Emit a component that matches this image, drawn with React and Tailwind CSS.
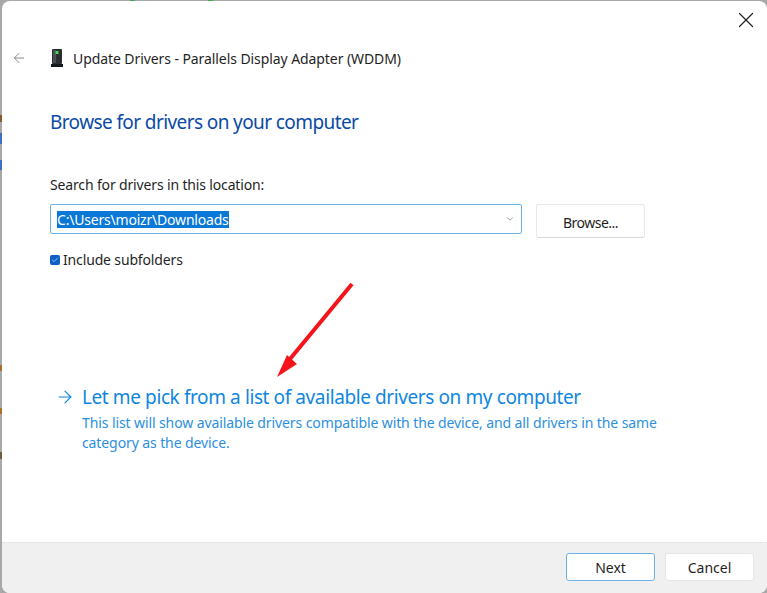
import React from 'react';
import { ChevronDown, ArrowLeft, ArrowRight, X, Check } from 'lucide-react';

function DeviceIcon() {
  return (
    <svg width="14" height="20" viewBox="0 0 14 20">
      <rect x="2" y="1" width="10" height="15" rx="1" fill="#2b2f33" />
      <rect x="3" y="2" width="3" height="13" fill="#4a5055" />
      <rect x="5.5" y="3" width="3" height="3" fill="#3ddc4a" />
      <rect x="1" y="16" width="12" height="3" fill="#15181a" />
    </svg>
  );
}

const marks = [
  'left-0 top-[115px] w-[2px] h-[7px] bg-[#8a5a2a]',
  'left-0 top-[133px] w-[2px] h-[11px] bg-[#3f6fc0]',
  'left-0 top-[160px] w-[2px] h-[10px] bg-[#3f6fc0]',
  'left-0 top-[365px] w-[2px] h-[6px] bg-[#a8722e]',
  'left-0 top-[408px] w-[2px] h-[6px] bg-[#a8722e]',
  'left-0 top-[452px] w-[2px] h-[7px] bg-[#7a5a3a]',
  'left-[130px] top-0 w-[5px] h-px bg-[#3fae4a]',
  'left-[208px] top-0 w-[5px] h-px bg-[#3fae4a]',
];

export default function App() {
  return (
    <div className="relative w-[767px] h-[593px] overflow-hidden bg-[#a8a8a8] font-['Noto_Sans',sans-serif] text-[#1f1f1f]">
      {marks.map((m) => <span key={m} className={'absolute ' + m} />)}

      <div className="relative h-[592px] ml-[2px] mt-px flex flex-col bg-white rounded-lg overflow-hidden">
        <div className="flex justify-end pt-[6px] pr-[8px] h-[42px]">
          <X size={26} strokeWidth={1.1} className="text-[#222]" />
        </div>

        <div className="flex-1 flex flex-col">
          <div className="flex items-center h-[30px] pl-[9px]">
            <ArrowLeft size={16} strokeWidth={1.5} className="text-[#8a8a8a]" />
            <div className="ml-[23px]"><DeviceIcon /></div>
            <span className="ml-[9px] text-[14px] tracking-[-0.08px]">Update Drivers - Parallels Display Adapter (WDDM)</span>
          </div>

          <h1 className="ml-[48px] mt-[36px] text-[19px] leading-[26px] tracking-[-0.6px] text-[#0a4aa6]">Browse for drivers on your computer</h1>

          <p className="ml-[48px] mt-[40px] text-[14px] leading-[20px] tracking-[-0.15px]">Search for drivers in this location:</p>

          <div className="flex items-start ml-[48px] mt-[9px]">
            <div className="flex items-center justify-between w-[472px] h-[30px] border border-[#6cb2ea] rounded-[2px] pl-[6px] pr-[6px]">
              <span className="bg-[#0a78d7] text-white text-[14px] leading-[17px] tracking-[-0.2px]">C:\Users\moizr\Downloads</span>
              <ChevronDown size={10} className="text-[#8a8a8a]" />
            </div>
            <button className="ml-[14px] pt-[2px] w-[109px] h-[34px] bg-white border border-[#e8e8e8] border-b-[#d8d8d8] rounded-[3px] text-[14px] tracking-[-0.5px]">Browse...</button>
          </div>

          <label className="flex items-center ml-[48px] mt-[12px] text-[14px] leading-[20px] tracking-[-0.15px]">
            <span className="flex items-center justify-center w-[10px] h-[10px] rounded-[2px] bg-[#0f5fc4]">
              <Check size={8} strokeWidth={2} className="text-[#cfe2f7]" />
            </span>
            <span className="ml-[3px]">Include subfolders</span>
          </label>

          <div className="flex ml-[53px] mt-[114px] text-[#0f86e0]">
            <ArrowRight size={20} strokeWidth={1.4} className="mt-[3px] shrink-0" />
            <div className="ml-[7px]">
              <p className="text-[19px] leading-[26px] tracking-[-0.4px]">Let me pick from a list of available drivers on my computer</p>
              <p className="mt-[3px] w-[590px] text-[14px] leading-[20px] tracking-[-0.1px] text-[#2c8fe0]">This list will show available drivers compatible with the device, and all drivers in the same category as the device.</p>
            </div>
          </div>
        </div>

        <div className="flex justify-end items-start gap-[10px] h-[51px] pt-[10px] pr-[13px] bg-[#f0f0f0] border-t border-dotted border-[#dcdcdc]">
          <button className="w-[89px] h-[28px] bg-white border border-[#6cb2ea] rounded-[3px] text-[14px]">Next</button>
          <button className="w-[89px] h-[28px] bg-white border border-[#e6e6e6] rounded-[3px] text-[14px]">Cancel</button>
        </div>
      </div>

      <svg className="absolute left-[270px] top-[275px]" width="90" height="110" viewBox="0 0 90 110">
        <line x1="82" y1="9" x2="20" y2="84" stroke="#f5141a" strokeWidth="4" />
        <polygon points="7,102 17,80 27,89" fill="#f5141a" />
      </svg>
    </div>
  );
}
